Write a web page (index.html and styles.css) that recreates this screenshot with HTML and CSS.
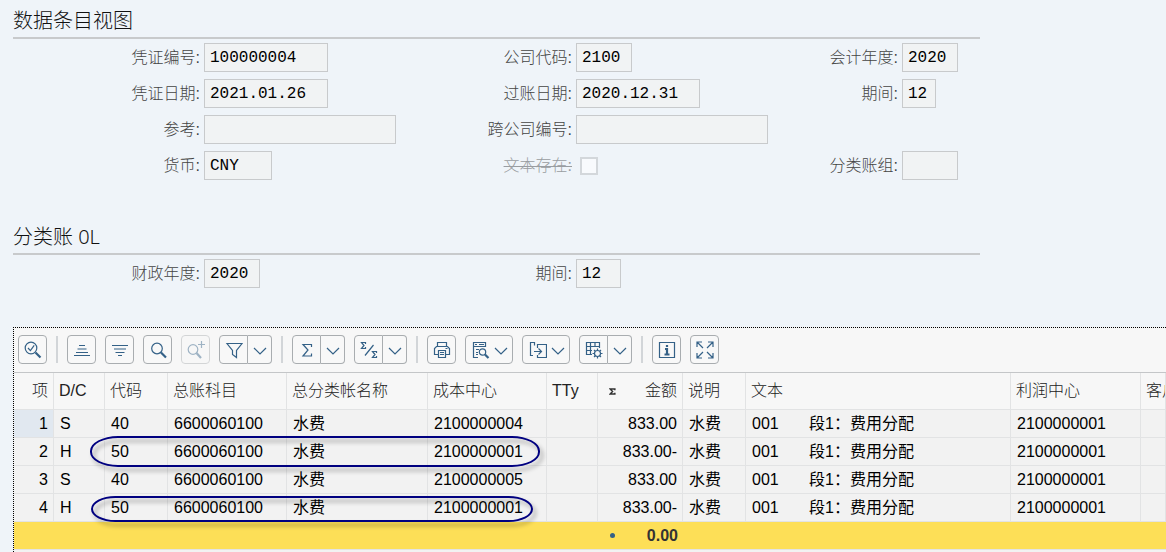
FILE: index.html
```html
<!DOCTYPE html>
<html lang="zh-CN">
<head>
<meta charset="utf-8">
<title>数据条目视图</title>
<link rel="stylesheet" href="styles.css">
</head>
<body>
<svg class="defs" aria-hidden="true">
  <symbol id="chevron" viewBox="0 0 14 8"><path d="M1 1l6 6 6-6"/></symbol>
</svg>
<main class="page">
  <section class="group">
    <h2 class="group-title">数据条目视图</h2>
    <div class="form-grid">
      <label class="c1" for="doc-no">凭证编号:</label><input id="doc-no" class="field date" value="100000004" readonly>
      <label class="c3" for="company">公司代码:</label><input id="company" class="field year" value="2100" readonly>
      <label class="c5" for="fiscal">会计年度:</label><input id="fiscal" class="field year" value="2020" readonly>

      <label class="c1" for="doc-date">凭证日期:</label><input id="doc-date" class="field date" value="2021.01.26" readonly>
      <label class="c3" for="post-date">过账日期:</label><input id="post-date" class="field date" value="2020.12.31" readonly>
      <label class="c5" for="period">期间:</label><input id="period" class="field tiny" value="12" readonly>

      <label class="c1" for="ref">参考:</label><input id="ref" class="field wide" value="" readonly>
      <label class="c3" for="cross">跨公司编号:</label><input id="cross" class="field wide" value="" readonly>

      <label class="c1" for="currency">货币:</label><input id="currency" class="field currency" value="CNY" readonly>
      <label class="c3 off" for="has-text">文本存在:</label><input id="has-text" class="check" type="checkbox" disabled>
      <label class="c5" for="ledger-group">分类账组:</label><input id="ledger-group" class="field year" value="" readonly>
    </div>
  </section>

  <section class="group">
    <h2 class="group-title">分类账 0L</h2>
    <div class="form-grid">
      <label class="c1" for="ledger-year">财政年度:</label><input id="ledger-year" class="field year" value="2020" readonly>
      <label class="c3" for="ledger-period">期间:</label><input id="ledger-period" class="field short" value="12" readonly>
    </div>
  </section>

  <section class="panel">
    <div class="toolbar" role="toolbar">
      <button class="btn" aria-label="明细"><svg class="icon" viewBox="0 0 18 18"><circle cx="7" cy="7" r="5.8"/><path d="M4 7l2.4 2.6L10.2 4.4"/><path class="bold" d="M11.5 11.5l5 5"/></svg></button>
      <span class="sep"></span>
      <button class="btn" aria-label="升序排序"><svg class="icon" viewBox="0 0 18 18"><path d="M6 4.500h6M3 11.500h12M1 14.500h16"/><path class="soft" d="M4.500 8h9"/></svg></button>
      <button class="btn" aria-label="降序排序"><svg class="icon" viewBox="0 0 18 18"><path d="M1 4.500h16M4.500 11.500h9M7 14.500h4"/><path class="soft" d="M3 8h12"/></svg></button>
      <button class="btn" aria-label="查找"><svg class="icon" viewBox="0 0 18 18"><circle cx="8" cy="7.500" r="5.300"/><path class="bold" d="M12 11.500l5 5"/></svg></button>
      <button class="btn" aria-label="查找下一个" disabled><svg class="icon" viewBox="0 0 18 18"><circle cx="6" cy="8.500" r="4.800"/><path class="bold" d="M9.500 12l4.500 5"/><path d="M14.500 0v7M11 3.500h7"/></svg></button>
      <div class="split"><button class="btn" aria-label="过滤"><svg class="icon" viewBox="0 0 18 18"><path d="M2 2.500h15l-5.500 7v7l-4-3v-4z"/></svg></button><button class="btn drop" aria-label="过滤选项"><svg class="chev"><use href="#chevron"/></svg></button></div>
      <span class="sep"></span>
      <div class="split"><button class="btn" aria-label="合计"><svg class="icon" viewBox="0 0 18 18"><path d="M13.500 6V3.500H5l5 5.500-5 6h8.500v-2.500"/></svg></button><button class="btn drop" aria-label="合计选项"><svg class="chev"><use href="#chevron"/></svg></button></div>
      <div class="split"><button class="btn" aria-label="小计"><svg class="icon" viewBox="0 0 18 18"><path d="M5.500 3V1.500h-4l2.500 3-2.500 3h4V6M5 14.500L13.500 4M16.500 12v-1.500h-4l2.500 3-2.500 3h4V15"/></svg></button><button class="btn drop" aria-label="小计选项"><svg class="chev"><use href="#chevron"/></svg></button></div>
      <span class="sep"></span>
      <button class="btn" aria-label="打印"><svg class="icon" viewBox="0 0 18 18"><path d="M4.500 5.500v-4h9v4M5 13.500H1.500v-6l2-2h11l2 2v6H13M5.500 9.500h7v7h-7zM7 11.500h4M7 13.500h4M12.500 7.500h2"/></svg></button>
      <button class="btn menu" aria-label="视图"><svg class="icon" viewBox="0 0 18 18"><path d="M6 16.500H1.500v-15h12V6M3 3.500h2M7 3.500h5M1.500 5.500h12M4 8.500h3M4 11.500h2M4 13.500h2"/><circle cx="10.500" cy="11" r="3.200"/><path class="bold" d="M13 13.500l3.500 3.500"/></svg><svg class="chev"><use href="#chevron"/></svg></button>
      <button class="btn menu" aria-label="导出"><svg class="icon" viewBox="0 0 18 18"><path d="M4 14.500H1.500v-13h4v3M8.500 7V3.500h9v13h-9V14M5 10.500h7M9.500 7.500l3 3-3 3"/></svg><svg class="chev"><use href="#chevron"/></svg></button>
      <div class="split"><button class="btn" aria-label="布局"><svg class="icon" viewBox="0 0 18 18"><path d="M7 13.500H1.500v-12h13V7M1.500 5.500h13M1.500 9.500H7M5.500 1.500v12M10 1.500V6"/><circle cx="12.500" cy="12.500" r="3"/><path d="M12.500 7.500v2M12.500 15.500v2M7.500 12.500h2M15.500 12.500h2M9 9l1.400 1.400M14.600 14.600L16 16M16 9l-1.400 1.400M10.400 14.600L9 16"/></svg></button><button class="btn drop" aria-label="布局选项"><svg class="chev"><use href="#chevron"/></svg></button></div>
      <span class="sep"></span>
      <button class="btn" aria-label="信息"><svg class="icon" viewBox="0 0 18 18"><path d="M1.500 1.500h15v15h-15z"/><path class="bold" d="M9 4v2M7 8h2v5M6.500 13.500h5"/></svg></button>
      <button class="btn" aria-label="全屏"><svg class="icon" viewBox="0 0 18 18"><path d="M1 6V1h5M12 1h5v5M17 12v5h-5M6 17H1v-5M1.500 1.500L7 7M16.500 1.500L11 7M16.500 16.500L11 11M1.500 16.500L7 11"/></svg></button>
    </div>

    <div class="table-wrap">
      <table class="items">
        <colgroup>
          <col class="w-item"><col class="w-dc"><col class="w-code"><col class="w-acct"><col class="w-name"><col class="w-acct"><col class="w-dc"><col class="w-amount"><col class="w-code"><col class="w-text"><col class="w-profit"><col>
        </colgroup>
        <thead>
          <tr><th class="num">项</th><th>D/C</th><th>代码</th><th>总账科目</th><th>总分类帐名称</th><th>成本中心</th><th>TTy</th>
          <th><div class="sum"><svg class="sigma" viewBox="0 0 6 6"><path d="M5 2V.8H1L3 3 1 5.200h4V4"/></svg><span>金额</span></div></th>
          <th>说明</th><th>文本</th><th>利润中心</th><th>客户</th></tr>
        </thead>
        <tbody>
          <tr><td class="num current">1</td><td>S</td><td>40</td><td>6600060100</td><td>水费</td><td>2100000004</td><td></td><td class="num">833.00</td><td>水费</td><td><span class="step">001</span>段1：费用分配</td><td>2100000001</td><td></td></tr>
          <tr><td class="num">2</td><td>H</td><td>50</td><td>6600060100</td><td>水费</td><td>2100000001</td><td></td><td class="num">833.00-</td><td>水费</td><td><span class="step">001</span>段1：费用分配</td><td>2100000001</td><td></td></tr>
          <tr><td class="num">3</td><td>S</td><td>40</td><td>6600060100</td><td>水费</td><td>2100000005</td><td></td><td class="num">833.00</td><td>水费</td><td><span class="step">001</span>段1：费用分配</td><td>2100000001</td><td></td></tr>
          <tr><td class="num">4</td><td>H</td><td>50</td><td>6600060100</td><td>水费</td><td>2100000001</td><td></td><td class="num">833.00-</td><td>水费</td><td><span class="step">001</span>段1：费用分配</td><td>2100000001</td><td></td></tr>
        </tbody>
        <tfoot>
          <tr><td colspan="7"></td><td><div class="sum"><span class="dot"></span><span>0.00</span></div></td><td colspan="4"></td></tr>
        </tfoot>
      </table>
      <div class="mark mark-first"></div>
      <div class="mark mark-second"></div>
    </div>
  </section>
</main>
</body>
</html>
```
FILE: styles.css
```css
* { box-sizing: border-box; }

body {
  margin: 0;
  background: #eff4f9;
  color: #000;
  font-family: "Liberation Sans", "Noto Sans CJK SC", sans-serif;
  font-size: 16px;
}

.defs { display: none; }

.page {
  display: flex;
  flex-direction: column;
  min-height: 100vh;
  padding: 3px 0 0 13px;
}

.group { margin-right: 186px; }

.group-title {
  margin: 0;
  height: 36px;
  line-height: 36px;
  border-bottom: 2px solid #c8cacc;
  color: #111;
  font-family: "Noto Sans", "Noto Sans CJK SC", sans-serif;
  font-size: 20px;
  font-weight: 300;
}

.form-grid {
  display: grid;
  grid-template-columns: 187fr 192fr 172fr 192fr 126fr 78fr;
  column-gap: 4px;
  row-gap: 7px;
  align-items: center;
  padding: 4px 0 39px;
}

.form-grid label {
  height: 29px;
  line-height: 30px;
  text-align: right;
  white-space: nowrap;
  color: #444;
  font-weight: 300;
}

.c1 { grid-column: 1; }
.c3 { grid-column: 3; }
.c5 { grid-column: 5; }

.form-grid .off {
  color: #999da1;
  text-decoration: line-through;
}

.field {
  height: 29px;
  padding: 0 5px;
  border: 1px solid #c8cacc;
  border-radius: 0;
  background: #f1f3f4;
  color: #000;
  font: 16px "Liberation Mono", monospace;
}

.tiny { width: 34px; }
.short { width: 45px; }
.year { width: 56px; }
.currency { width: 68px; }
.date { width: 124px; }
.wide { width: 192px; }

.check {
  appearance: none;
  width: 18px;
  height: 18px;
  margin: 0 0 0 4px;
  border: 2px solid #d3d7db;
  background: #f8fafd;
}

.panel {
  flex: 1;
  border: 1px dotted #000;
  border-width: 1px 0 0 1px;
  background: #f2f2f2;
}

.toolbar {
  display: flex;
  align-items: center;
  gap: 9px;
  height: 45px;
  padding: 0 4px 1px;
  border-bottom: 1px solid #c4c6c8;
  background: #f7f7f7;
}

.sep {
  width: 2px;
  height: 27px;
  background: #d2d5d8;
}

.btn {
  display: flex;
  flex: none;
  align-items: center;
  justify-content: center;
  gap: 4px;
  width: 29px;
  height: 29px;
  padding: 0;
  border: 1px solid #a9adb0;
  border-radius: 4px;
  background: #f8f8f8;
  color: #346187;
}

.btn:disabled { opacity: 0.45; }
.menu { width: 48px; }
.split { display: flex; }
.split .btn:first-child { border-radius: 4px 0 0 4px; }

.split .drop {
  width: 24px;
  border-left: 0;
  border-radius: 0 4px 4px 0;
}

.icon {
  width: 18px;
  height: 18px;
  margin: 1px 0 0 1px;
  fill: none;
  stroke: currentColor;
  stroke-width: 1.2;
}

.icon .bold { stroke-width: 2.2; }
.icon .soft { stroke-width: 2; opacity: 0.5; }

.chev {
  width: 14px;
  height: 8px;
  margin-top: 3px;
  fill: none;
  stroke: currentColor;
  stroke-width: 1.2;
}

.table-wrap {
  position: relative;
  overflow: hidden;
}

.items {
  width: 100%;
  table-layout: fixed;
  border-collapse: separate;
  border-spacing: 0;
}

.w-item { width: 40px; }
.w-dc { width: 51px; }
.w-code { width: 63px; }
.w-acct { width: 119px; }
.w-name { width: 141px; }
.w-amount { width: 85px; }
.w-text { width: 265px; }
.w-profit { width: 130px; }

.items th,
.items td {
  overflow: hidden;
  height: 28px;
  padding: 0 5px 0 6px;
  border: 1px solid #e2e3e4;
  border-width: 0 1px 1px 0;
  line-height: 20px;
  text-align: left;
  white-space: nowrap;
}

.items th {
  height: 37px;
  padding-left: 5px;
  background: #f7f7f7;
  color: #222;
  font-weight: 300;
}

.items .num { text-align: right; }
.items .current { background: #e1e8f0; }

.items tfoot td {
  border-right: 0;
  background: #fddf57;
  color: #333;
  font-weight: 700;
}

.step {
  display: inline-block;
  width: 57px;
}

.sum {
  display: flex;
  align-items: center;
  justify-content: space-between;
  padding-left: 6px;
}

.sigma {
  width: 7px;
  height: 7px;
  fill: none;
  stroke: #333;
  stroke-width: 1.3;
}

.dot {
  width: 5px;
  height: 5px;
  border-radius: 50%;
  background: #346187;
}

.mark {
  position: absolute;
  border: 2px solid #000080;
  border-radius: 28px / 15px;
  filter: drop-shadow(3px 4px 2px rgba(0, 0, 0, 0.35));
  pointer-events: none;
}

.mark-first {
  top: 63px;
  left: 76px;
  width: 450px;
  height: 31px;
}

.mark-second {
  top: 123px;
  left: 77px;
  width: 442px;
  height: 26px;
}
```
